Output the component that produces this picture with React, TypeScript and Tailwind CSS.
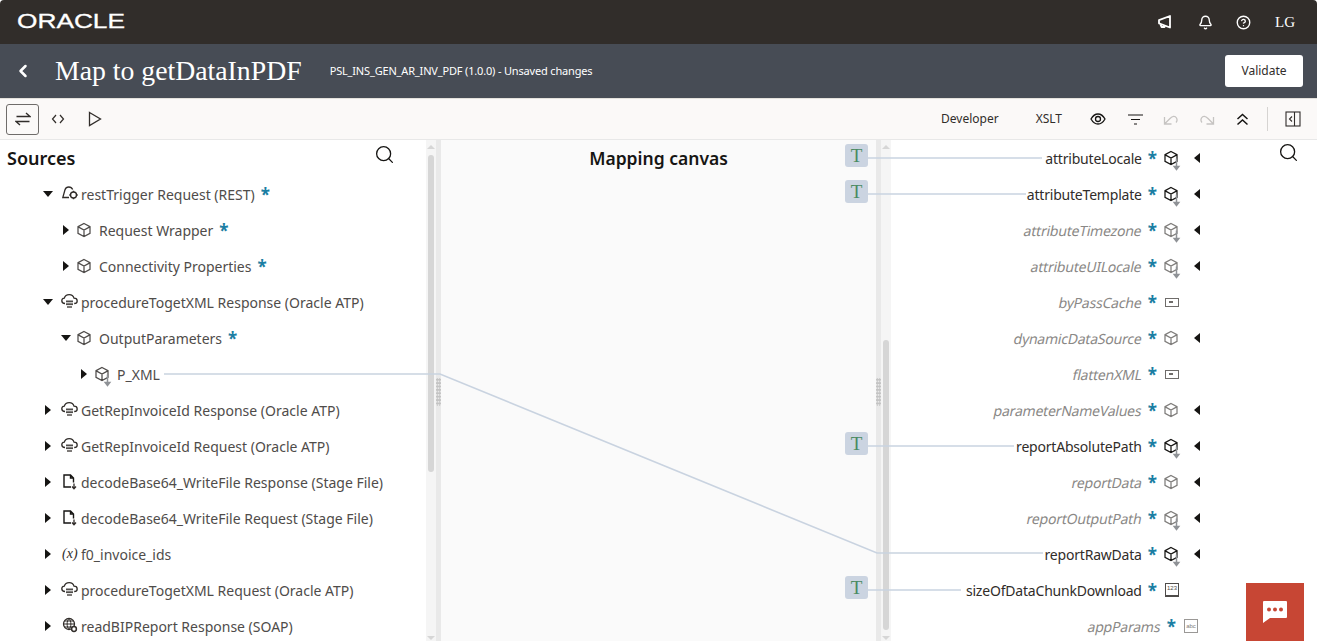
import { Bell, ChevronLeft, CircleHelp, Search } from "lucide-react";

type SourceIcon = "rest" | "cube" | "cubeArrow" | "db" | "file" | "var" | "soap";

type SourceRow = {
  label: string;
  depth: 0 | 1 | 2;
  open?: boolean;
  icon: SourceIcon;
  required?: boolean;
};

type TargetRow = {
  label: string;
  mapped?: boolean;
  icon: "cube" | "cubeArrow" | "field" | "num" | "abc";
  caret?: boolean;
  shifted?: boolean;
};

const sources: SourceRow[] = [
  { label: "restTrigger Request (REST)", depth: 0, open: true, icon: "rest", required: true },
  { label: "Request Wrapper", depth: 1, icon: "cube", required: true },
  { label: "Connectivity Properties", depth: 1, icon: "cube", required: true },
  { label: "procedureTogetXML Response (Oracle ATP)", depth: 0, open: true, icon: "db" },
  { label: "OutputParameters", depth: 1, open: true, icon: "cube", required: true },
  { label: "P_XML", depth: 2, icon: "cubeArrow" },
  { label: "GetRepInvoiceId Response (Oracle ATP)", depth: 0, icon: "db" },
  { label: "GetRepInvoiceId Request (Oracle ATP)", depth: 0, icon: "db" },
  { label: "decodeBase64_WriteFile Response (Stage File)", depth: 0, icon: "file" },
  { label: "decodeBase64_WriteFile Request (Stage File)", depth: 0, icon: "file" },
  { label: "f0_invoice_ids", depth: 0, icon: "var" },
  { label: "procedureTogetXML Request (Oracle ATP)", depth: 0, icon: "db" },
  { label: "readBIPReport Response (SOAP)", depth: 0, icon: "soap" },
];

const targets: TargetRow[] = [
  { label: "attributeLocale", mapped: true, icon: "cubeArrow", caret: true },
  { label: "attributeTemplate", mapped: true, icon: "cubeArrow", caret: true },
  { label: "attributeTimezone", icon: "cubeArrow", caret: true },
  { label: "attributeUILocale", icon: "cubeArrow", caret: true },
  { label: "byPassCache", icon: "field" },
  { label: "dynamicDataSource", icon: "cube", caret: true },
  { label: "flattenXML", icon: "field" },
  { label: "parameterNameValues", icon: "cube", caret: true },
  { label: "reportAbsolutePath", mapped: true, icon: "cubeArrow", caret: true },
  { label: "reportData", icon: "cube", caret: true },
  { label: "reportOutputPath", icon: "cubeArrow", caret: true },
  { label: "reportRawData", mapped: true, icon: "cubeArrow", caret: true },
  { label: "sizeOfDataChunkDownload", mapped: true, icon: "num" },
  { label: "appParams", icon: "abc", shifted: true },
];

const depthPadding = { 0: "pl-[42px]", 1: "pl-[60px]", 2: "pl-[78px]" };

function Cube({ dark = false, faded = false, arrow = false }: { dark?: boolean; faded?: boolean; arrow?: boolean }) {
  const stroke = faded ? "#7f7d7b" : dark ? "#161513" : "#4f4c4a";
  return (
    <svg width="20" height="22" viewBox="1 0 20 22" fill="none" className="shrink-0 overflow-visible">
      <path d="M7 4.5 13 7.7V14.3L7 17.5 1 14.3V7.7ZM1.2 7.9 7 11.1 12.8 7.9M7 11.1V17.3" stroke={stroke} strokeWidth="1.25" />
      {arrow && <path d="M12.5 11.5V20M10.2 19.5H14.8L12.5 22.5Z" stroke="#8f9296" strokeWidth="1.5" fill="#8f9296" />}
    </svg>
  );
}

function CloudDb() {
  return (
    <svg width="20" height="18" viewBox="0 0 20 18" fill="none" className="shrink-0">
      <path d="M5 10.5C3.2 10.5 1.8 9.4 1.8 7.8 1.8 6.4 2.9 5.3 4.3 5.2 4.9 3 6.8 1.6 9.2 1.6 11.5 1.6 13.4 3 14 5.1 15.7 5.1 17.2 6.3 17.2 7.9 17.2 9.4 15.8 10.5 14.2 10.5" stroke="#312d2a" strokeWidth="1.3" />
      <rect x="6" y="7.5" width="7" height="1.8" fill="#4f4c4a" />
      <rect x="6" y="10.3" width="7" height="1.8" fill="#4f4c4a" />
      <rect x="7" y="13.1" width="5" height="1.8" fill="#6f6c6a" />
    </svg>
  );
}

function CloudGear() {
  return (
    <svg width="20" height="18" viewBox="0 0 20 18" fill="none" className="shrink-0">
      <path d="M9 12.5H2.8L5 4.8C5.6 3 7 2 8.8 2 10.6 2 12 3 12.7 4.6" stroke="#312d2a" strokeWidth="1.3" />
      <circle cx="13.5" cy="10" r="3" stroke="#312d2a" strokeWidth="1.4" />
      <path d="M13.5 5.8V7M13.5 13V14.2M9.3 10H10.5M16.5 10H17.7" stroke="#312d2a" strokeWidth="1.4" />
    </svg>
  );
}

function FileIcon() {
  return (
    <svg width="20" height="18" viewBox="0 0 20 18" fill="none" className="shrink-0">
      <path d="M11 14H4V2H10.5L13.5 5V9.5M10.5 2V5H13.5" stroke="#161513" strokeWidth="1.4" />
      <path d="M14 10.5V15.5M12 13.5 14 15.8 16 13.5" stroke="#312d2a" strokeWidth="1.3" />
    </svg>
  );
}

function GlobeGear() {
  return (
    <svg width="20" height="18" viewBox="0 0 20 18" fill="none" className="shrink-0">
      <circle cx="9" cy="7" r="5.5" stroke="#312d2a" strokeWidth="1.3" />
      <path d="M3.5 7H14.5M9 1.5C6.5 4.5 6.5 9.5 9 12.5M9 1.5C11.5 4.5 11.5 9.5 9 12.5M4.5 4H13.5M4.5 10H12" stroke="#312d2a" strokeWidth="1" />
      <circle cx="14" cy="12" r="2.4" fill="#fff" stroke="#312d2a" strokeWidth="1.5" />
    </svg>
  );
}

function SourceGlyph({ icon }: { icon: SourceIcon }) {
  if (icon === "rest") return <CloudGear />;
  if (icon === "db") return <CloudDb />;
  if (icon === "file") return <FileIcon />;
  if (icon === "soap") return <GlobeGear />;
  if (icon === "var") {
    return <span className="w-[20px] shrink-0 pl-[2px] text-[14px] font-medium italic leading-none text-[#312d2a] font-['Liberation_Serif',serif]">(x)</span>;
  }
  return <Cube arrow={icon === "cubeArrow"} />;
}

function TargetGlyph({ row }: { row: TargetRow }) {
  if (row.icon === "cube" || row.icon === "cubeArrow") {
    return <Cube arrow={row.icon === "cubeArrow"} dark={row.mapped} faded={!row.mapped} />;
  }
  if (row.icon === "field") {
    return (
      <span className="flex h-[9px] w-[14px] items-center border border-[#6f6c6a] pl-[3px]">
        <span className="h-[2px] w-[4px] bg-[#6f6c6a]" />
      </span>
    );
  }
  if (row.icon === "num") {
    return (
      <span className="flex h-[14px] w-[14px] flex-col items-center border border-b-2 border-[#4f4c4a] text-[6px] leading-[9px] text-[#4f4c4a] font-['Liberation_Sans',sans-serif]">
        123
      </span>
    );
  }
  return (
    <span className="flex h-[14px] w-[14px] items-center justify-center border border-[#9a9896] text-[6px] leading-none text-[#7f7d7b] font-['Liberation_Sans',sans-serif]">
      abc
    </span>
  );
}

function TriangleRight() {
  return <span className="h-0 w-0 border-y-[5px] border-l-[6px] border-y-transparent border-l-[#161513]" />;
}

function TriangleDown() {
  return <span className="h-0 w-0 border-x-[5.5px] border-t-[6px] border-x-transparent border-t-[#161513]" />;
}

function Star() {
  return <span className="inline-block pt-[4px] text-[17px] font-bold leading-none text-[#1b7ea3]">*</span>;
}

function Scrollbar({ thumb }: { thumb: string }) {
  return (
    <div className="relative h-full w-[10px] shrink-0 bg-[#f5f5f5]">
      <span className="absolute left-[1px] top-[5px] h-0 w-0 border-x-[4px] border-b-[4px] border-x-transparent border-b-[#d6d6d6]" />
      <div className={`absolute left-[2px] w-[6px] rounded-[3px] bg-[#d6d6d6] ${thumb}`} />
      <span className="absolute bottom-[1px] left-[1px] h-0 w-0 border-x-[4px] border-t-[4px] border-x-transparent border-t-[#d6d6d6]" />
    </div>
  );
}

function Gutter() {
  return (
    <div className="flex h-full w-[5px] shrink-0 justify-center bg-[#e9e9e9] pt-[238px]">
      <div className="h-[28px] w-[5px] bg-[radial-gradient(#c4c4c4_1px,transparent_1px)] bg-[length:2.5px_3.4px]" />
    </div>
  );
}

function TextNode({ top }: { top: string }) {
  return (
    <div className={`absolute left-[845px] flex h-[23px] w-[23px] items-center justify-center rounded-[3px] bg-[#cbd4e1] text-[19px] leading-none text-[#4a8a62] font-['Liberation_Serif',serif] ${top}`}>
      T
    </div>
  );
}

export default function App() {
  return (
    <div className="flex h-screen w-full flex-col overflow-hidden bg-white font-['Noto_Sans',sans-serif] text-[#4f4c4a]">
      <header className="flex h-[44px] shrink-0 items-center rounded-t-[4px] bg-[#312d2a] pl-[17px] pr-[22px]">
        <svg width="108" height="20" viewBox="0 0 108 20" className="mb-[3px]">
          <text x="0" y="17" fill="#fff" stroke="#fff" strokeWidth="0.3" fontSize="20" fontFamily="Liberation Sans, sans-serif" textLength="108" lengthAdjust="spacingAndGlyphs">
            ORACLE
          </text>
        </svg>
        <div className="ml-auto flex items-center text-white">
          <svg width="15" height="14" viewBox="0 0 15 14" fill="none">
            <path d="M13 1 2 5.2V8.3L13 12.5ZM3 8.5 4.5 12H7.5L6.5 9.8" stroke="#fff" strokeWidth="1.8" strokeLinejoin="round" />
          </svg>
          <Bell size={15} strokeWidth={2.2} className="ml-[26px]" />
          <CircleHelp size={15} strokeWidth={2.2} className="ml-[23px]" />
          <span className="ml-[24px] text-[15px] leading-none font-['Liberation_Serif',serif]">LG</span>
        </div>
      </header>

      <div className="flex h-[54px] shrink-0 items-center bg-[#474c55] pl-[13px] pr-[14px] text-white">
        <ChevronLeft size={20} strokeWidth={3} />
        <h1 className="ml-[22px] text-[27.75px] leading-none font-['Liberation_Serif',serif]">Map to getDataInPDF</h1>
        <span className="ml-[28px] text-[11px] tracking-[-0.17px]">PSL_INS_GEN_AR_INV_PDF (1.0.0) - Unsaved changes</span>
        <button className="ml-auto h-[32px] w-[78px] rounded-[3px] bg-white text-[12px] text-[#312d2a]">Validate</button>
      </div>

      <div className="flex h-[42px] shrink-0 items-center border-y border-t-[#e4e1dc] border-b-[#e8e8e8] bg-[#fbf9f8] pl-[6px] pr-[16px] text-[#312d2a]">
        <button className="flex h-[31px] w-[33px] items-center justify-center rounded-[3px] border border-[#6f6c6a]">
          <svg width="16" height="14" viewBox="0 0 16 14" fill="none">
            <path d="M1.5 4.5H15L11 1M14.5 9.5H1L5 13" stroke="#312d2a" strokeWidth="1.4" />
          </svg>
        </button>
        <svg width="14" height="12" viewBox="0 0 14 12" fill="none" className="ml-[12px]">
          <path d="M5 2 1.5 6 5 10M9 2 12.5 6 9 10" stroke="#312d2a" strokeWidth="1.2" />
        </svg>
        <svg width="14" height="16" viewBox="0 0 14 16" fill="none" className="ml-[23px]">
          <path d="M1.5 1.5 12.5 8 1.5 14.5Z" stroke="#312d2a" strokeWidth="1.3" />
        </svg>
        <span className="ml-auto text-[12px]">Developer</span>
        <span className="ml-[37px] text-[12px]">XSLT</span>
        <svg width="16" height="12" viewBox="0 0 16 12" fill="none" className="ml-[28px]">
          <path d="M1 6C2.8 2.8 5.2 1 8 1 10.8 1 13.2 2.8 15 6 13.2 9.2 10.8 11 8 11 5.2 11 2.8 9.2 1 6Z" stroke="#161513" strokeWidth="1.3" />
          <circle cx="8" cy="6" r="2.5" stroke="#161513" strokeWidth="1.3" />
        </svg>
        <svg width="15" height="11" viewBox="0 0 15 11" fill="none" className="ml-[22px]">
          <path d="M0 1H15M3 5.5H12M6 10H9" stroke="#161513" strokeWidth="1.2" />
        </svg>
        <svg width="15" height="14" viewBox="0 0 15 14" fill="none" className="ml-[20px]">
          <path d="M1.5 5V12H8.5M1.5 12 7 6.5C9.5 4 12 3.5 13.5 6 14.5 8 14 9.5 13 10.5" stroke="#c6c4c2" strokeWidth="1.3" />
        </svg>
        <svg width="15" height="14" viewBox="0 0 15 14" fill="none" className="ml-[22px]">
          <path d="M13.5 5V12H6.5M13.5 12 8 6.5C5.5 4 3 3.5 1.5 6 0.5 8 1 9.5 2 10.5" stroke="#c6c4c2" strokeWidth="1.3" />
        </svg>
        <svg width="13" height="13" viewBox="0 0 13 13" fill="none" className="ml-[21px]">
          <path d="M1.5 6 6.5 1.5 11.5 6M1.5 11.5 6.5 7 11.5 11.5" stroke="#161513" strokeWidth="1.5" />
        </svg>
        <div className="ml-[18px] h-[24px] w-px bg-[#d6d4d2]" />
        <svg width="16" height="16" viewBox="0 0 16 16" fill="none" className="ml-[17px]">
          <rect x="1" y="1" width="14" height="14" stroke="#312d2a" strokeWidth="1.1" />
          <path d="M9.5 1V15M7 5.5 4.5 8 7 10.5" stroke="#312d2a" strokeWidth="1.1" />
        </svg>
      </div>

      <main className="relative flex min-h-0 flex-1">
        <section className="h-full w-[426px] shrink-0">
          <div className="flex h-[36px] items-center justify-between pl-[7px] pr-[31px]">
            <h2 className="text-[18px] font-semibold leading-none text-[#161513]">Sources</h2>
            <Search size={21} strokeWidth={1.5} className="mb-[7px] text-[#161513]" />
          </div>
          {sources.map((row) => (
            <div key={row.label} className={`flex h-[36px] items-center text-[14px] ${depthPadding[row.depth]}`}>
              <span className="flex w-[11px] shrink-0 items-center justify-center">
                {row.open ? <TriangleDown /> : <TriangleRight />}
              </span>
              <span className="ml-[7px] mr-[1px] flex items-center">
                <SourceGlyph icon={row.icon} />
              </span>
              <span className="whitespace-nowrap">{row.label}</span>
              {row.required && <span className="ml-[6px]"><Star /></span>}
            </div>
          ))}
        </section>
        <Scrollbar thumb="top-[15px] h-[317px]" />
        <Gutter />

        <section className="h-full w-[435px] shrink-0 bg-[#fafafa]">
          <h2 className="pt-[6px] text-center text-[17.5px] font-semibold leading-[24px] text-[#161513]">Mapping canvas</h2>
        </section>
        <Gutter />
        <Scrollbar thumb="top-[200px] h-[290px]" />

        <section className="relative h-full min-w-0 flex-1">
          <div className="absolute left-[387px] top-[2px]">
            <Search size={21} strokeWidth={1.5} className="text-[#161513]" />
          </div>
          <div>
            {targets.map((row) => (
              <div key={row.label} className={`flex h-[36px] items-center justify-end text-[14px] ${row.shifted ? "pr-[98px]" : "pr-[117px]"}`}>
                <span className={row.mapped ? "tracking-[-0.2px] text-[#312d2a]" : "inline-block -skew-x-12 tracking-[-0.22px] text-[#8a8886]"}>{row.label}</span>
                <span className="ml-[6px] mr-[8px]"><Star /></span>
                <span className="flex h-[22px] w-[20px] items-center justify-start">
                  <TargetGlyph row={row} />
                </span>
                <span className="ml-[8px] flex w-[7px] justify-center">
                  {row.caret && <span className="h-0 w-0 border-y-[5px] border-r-[6px] border-y-transparent border-r-[#161513]" />}
                </span>
              </div>
            ))}
          </div>
        </section>

        <TextNode top="top-[4px]" />
        <TextNode top="top-[40px]" />
        <TextNode top="top-[292px]" />
        <TextNode top="top-[436px]" />

        <svg className="pointer-events-none absolute inset-0 h-full w-full" fill="none" stroke="#c9d3e0" strokeWidth="1.6">
          <path d="M868 18H1042" />
          <path d="M868 54H1026" />
          <path d="M868 306H1014" />
          <path d="M868 450H961" />
          <path d="M164 234H440L877 413H1043" />
        </svg>

        <button className="absolute bottom-0 right-[13px] flex h-[58px] w-[58px] items-center justify-center bg-[#c74634]">
          <svg width="26" height="24" viewBox="0 0 26 24">
            <path d="M2 1H24Q25 1 25 2V17Q25 18 24 18H8L1 23V2Q1 1 2 1Z" fill="#fff" />
            <circle cx="7" cy="9.5" r="2" fill="#c74634" />
            <circle cx="13" cy="9.5" r="2" fill="#c74634" />
            <circle cx="19" cy="9.5" r="2" fill="#c74634" />
          </svg>
        </button>
      </main>
    </div>
  );
}
